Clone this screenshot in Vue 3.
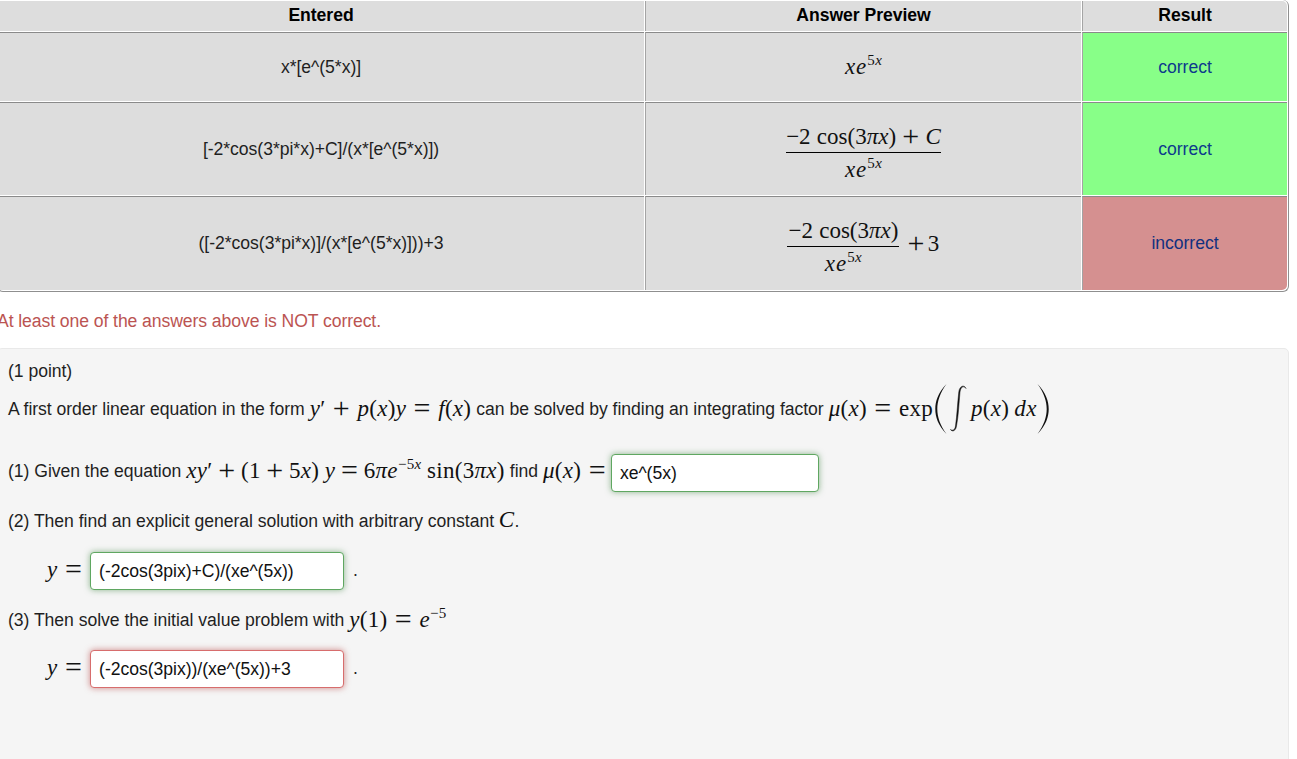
<template>
  <div class="page">
    <table class="attempt-results">
      <thead>
        <tr>
          <th class="col-entered">Entered</th>
          <th class="col-preview">Answer Preview</th>
          <th class="col-result">Result</th>
        </tr>
      </thead>
      <tbody>
        <tr class="row-a">
          <td>x*[e^(5*x)]</td>
          <td>
            <span class="math"><i>x</i><i>e</i><sup class="sup"><span>5</span><i>x</i></sup></span>
          </td>
          <td class="ok">correct</td>
        </tr>
        <tr class="row-b">
          <td>[-2*cos(3*pi*x)+C]/(x*[e^(5*x)])</td>
          <td>
            <span class="math frac">
              <span class="num">−2 cos(3<i>πx</i>) <span class="op">+</span> <i>C</i></span>
              <span class="den"><i>x</i><i>e</i><sup class="sup"><span>5</span><i>x</i></sup></span>
            </span>
          </td>
          <td class="ok">correct</td>
        </tr>
        <tr class="row-c">
          <td>([-2*cos(3*pi*x)]/(x*[e^(5*x)]))+3</td>
          <td>
            <span class="math frac-row">
              <span class="frac">
                <span class="num">−2 cos(3<i>πx</i>)</span>
                <span class="den"><i>x</i><i>e</i><sup class="sup"><span>5</span><i>x</i></sup></span>
              </span>
              <span class="after-frac"><span class="op">+</span> 3</span>
            </span>
          </td>
          <td class="bad">incorrect</td>
        </tr>
      </tbody>
    </table>

    <p class="warning">At least one of the answers above is NOT correct.</p>

    <div class="problem">
      <p class="points">(1 point)</p>

      <p class="intro">
        A first order linear equation in the form
        <span class="math"><i>y</i>′ <span class="op">+</span> <i>p</i>(<i>x</i>)<i>y</i> <span class="op">=</span> <i>f</i>(<i>x</i>)</span>
        can be solved by finding an integrating factor
        <span class="math"><i>μ</i>(<i>x</i>) <span class="op">=</span> exp</span><svg class="paren" viewBox="0 0 14 52" width="14" height="52">
          <path d="M12.5 1 C4 10 1.300 18 1.300 26 C1.300 34 4 42 12.500 51 C6 42 3.300 34 3.300 26 C3.300 18 6 10 12.500 1 Z" />
        </svg><svg class="integral" viewBox="0 0 20 50" width="20" height="50">
          <path d="M18 4.500 C16 1.500 12.800 2.500 12 8 C11 18 10.500 32 8.500 42 C8 46.500 4.500 48.500 2.500 45.500 C4.500 47 7 46 7.500 42 C9 32 9.600 18 10.800 8 C11.500 1.500 16.500 0.500 18 4.500 Z" stroke-width="0.5" />
        </svg><span class="math tight int-body"><i>p</i>(<i>x</i>) <i>dx</i></span><svg class="paren flip" viewBox="0 0 14 52" width="14" height="52">
          <path d="M12.5 1 C4 10 1.300 18 1.300 26 C1.300 34 4 42 12.500 51 C6 42 3.300 34 3.300 26 C3.300 18 6 10 12.500 1 Z" />
        </svg>
      </p>

      <p class="given">
        (1) Given the equation
        <span class="math tight"><i>xy</i>′ <span class="op">+</span> (1 <span class="op">+</span> 5<i>x</i>) <i>y</i> <span class="op">=</span> 6<i>πe</i><sup class="sup"><span>−5</span><i>x</i></sup> sin(3<i>πx</i>)</span>
        find
        <span class="math"><i>μ</i>(<i>x</i>) <span class="op">=</span></span>
        <input class="answer answer-ok answer-mu" readonly value="xe^(5x)" />
      </p>

      <p class="step">(2) Then find an explicit general solution with arbitrary constant <span class="math"><i>C</i></span>.</p>

      <p class="answer-line first-answer">
        <span class="math"><i>y</i> <span class="op">=</span></span>
        <input class="answer answer-ok" readonly value="(-2cos(3pix)+C)/(xe^(5x))" />
        <span class="dot">.</span>
      </p>

      <p class="step step-3">
        (3) Then solve the initial value problem with
        <span class="math"><i>y</i>(1) <span class="op">=</span> <i>e</i><sup class="sup"><span>−5</span></sup></span>
      </p>

      <p class="answer-line second-answer">
        <span class="math"><i>y</i> <span class="op">=</span></span>
        <input class="answer answer-bad" readonly value="(-2cos(3pix))/(xe^(5x))+3" />
        <span class="dot">.</span>
      </p>
    </div>
  </div>
</template>

<script setup>
</script>

<style>
html,
body {
  overflow: hidden;
  background: #fff;
}
</style>

<style scoped>
.page {
  width: 1292px;
  height: 759px;
  margin-left: -3px;
  overflow: hidden;
  font-family: "Liberation Sans", Arial, sans-serif;
  font-size: 17.6px;
  letter-spacing: -0.04px;
  color: #1f1f1f;
}

.attempt-results {
  width: 1292px;
  table-layout: fixed;
  border-collapse: separate;
  border-spacing: 1px;
  border: 1px solid #8f8f8f;
  border-top: 0;
  border-radius: 0 6px 6px 6px;
  text-align: center;
}

.col-entered {
  width: 645px;
}

.col-preview {
  width: 436px;
}

th,
td {
  box-sizing: border-box;
  padding: 0;
  background: #ddd;
  border-left: 1px solid #a4a4a4;
}

th {
  height: 30px;
  padding-bottom: 2px;
  font-weight: 700;
  color: #000;
}

th:first-child,
td:first-child {
  padding-right: 2px;
}

th:last-child {
  border-top-right-radius: 5px;
}

td {
  border-top: 1px solid #8a8a8a;
  color: #1f1f1f;
}

.row-a td {
  height: 69px;
}

.row-b td {
  height: 93px;
}

.row-c td {
  height: 94px;
}

td.ok {
  background: #8f8;
  color: #0c3a8c;
}

td.bad {
  background: #d59090;
  border-bottom-right-radius: 5px;
  color: #12307f;
}

.warning {
  margin: 18px 0 16px 0;
  line-height: 22px;
  color: #bb5452;
  letter-spacing: -0.08px;
}

.problem {
  box-sizing: border-box;
  height: 420px;
  padding: 11px 10px;
  background: #f5f5f5;
  border: 1px solid #e9e9e9;
  border-radius: 5px;
}

.problem p {
  margin: 0;
  white-space: nowrap;
}

.points {
  line-height: 22px;
}

.intro {
  height: 54px;
  display: flex;
  align-items: center;
  gap: 5px;
}

.given {
  height: 40px;
  margin-top: 15px !important;
  display: flex;
  align-items: center;
  gap: 5px;
}

.step {
  margin-top: 13px !important;
  line-height: 32px;
}

.step-3 {
  display: flex;
  align-items: center;
  gap: 5px;
  height: 32px;
  margin-top: 14px !important;
}

.answer-line {
  height: 40px;
  padding-left: 39px;
  display: flex;
  align-items: center;
  gap: 8px;
}

.first-answer {
  margin-top: 13px !important;
}

.second-answer {
  margin-top: 12px !important;
}

.math {
  font-family: "Liberation Serif", "Times New Roman", serif;
  font-size: 23px;
  letter-spacing: 0.3px;
  word-spacing: 1.3px;
  color: #111;
  white-space: pre;
}

.op {
  font-size: 30px;
  line-height: 0;
  vertical-align: -2px;
}

.tight {
  word-spacing: -1px;
}

.given .tight {
  word-spacing: -0.5px;
}

.row-a .math,
.den {
  letter-spacing: 1px;
}

.sup {
  font-size: 15px;
  vertical-align: 9px;
  line-height: 0;
  letter-spacing: 0.3px;
}

.frac {
  display: inline-flex;
  flex-direction: column;
  align-items: center;
  vertical-align: middle;
  padding-top: 10px;
}

.num {
  width: 100%;
  box-sizing: border-box;
  line-height: 30px;
  border-bottom: 1px solid #000;
  text-align: center;
  letter-spacing: 0;
  word-spacing: 0.5px;
}

.row-c .num {
  padding: 0 1px;
}

.den {
  line-height: 34px;
  word-spacing: 0;
}

.frac-row {
  display: inline-flex;
  align-items: center;
  gap: 8px;
  vertical-align: middle;
}

.after-frac {
  word-spacing: -3px;
}

.paren {
  margin-left: -4px;
  fill: #111;
  flex: none;
}

.flip {
  transform: scaleX(-1);
  margin-left: -6px;
}

.integral {
  margin-left: -5px;
  fill: #111;
  stroke: #111;
  flex: none;
}

.int-body {
  margin-left: -2px;
}

.answer {
  box-sizing: border-box;
  width: 254px;
  height: 38px;
  padding: 0 8px;
  background: #fff;
  border: 1px solid #5fa761;
  border-radius: 4px;
  font-family: "Liberation Sans", Arial, sans-serif;
  font-size: 17.6px;
  letter-spacing: -0.04px;
  color: #111;
  outline: none;
}

.answer-line .answer {
  margin-top: 2px;
}

.answer-mu {
  width: 208px;
  margin-top: 4px;
}

.answer-ok {
  box-shadow: 0 0 6px rgba(70, 136, 71, 0.6);
}

.answer-bad {
  border-color: #d76d6d;
  box-shadow: 0 0 6px rgba(185, 74, 72, 0.65);
}

.dot {
  margin-left: 1px;
}
</style>
